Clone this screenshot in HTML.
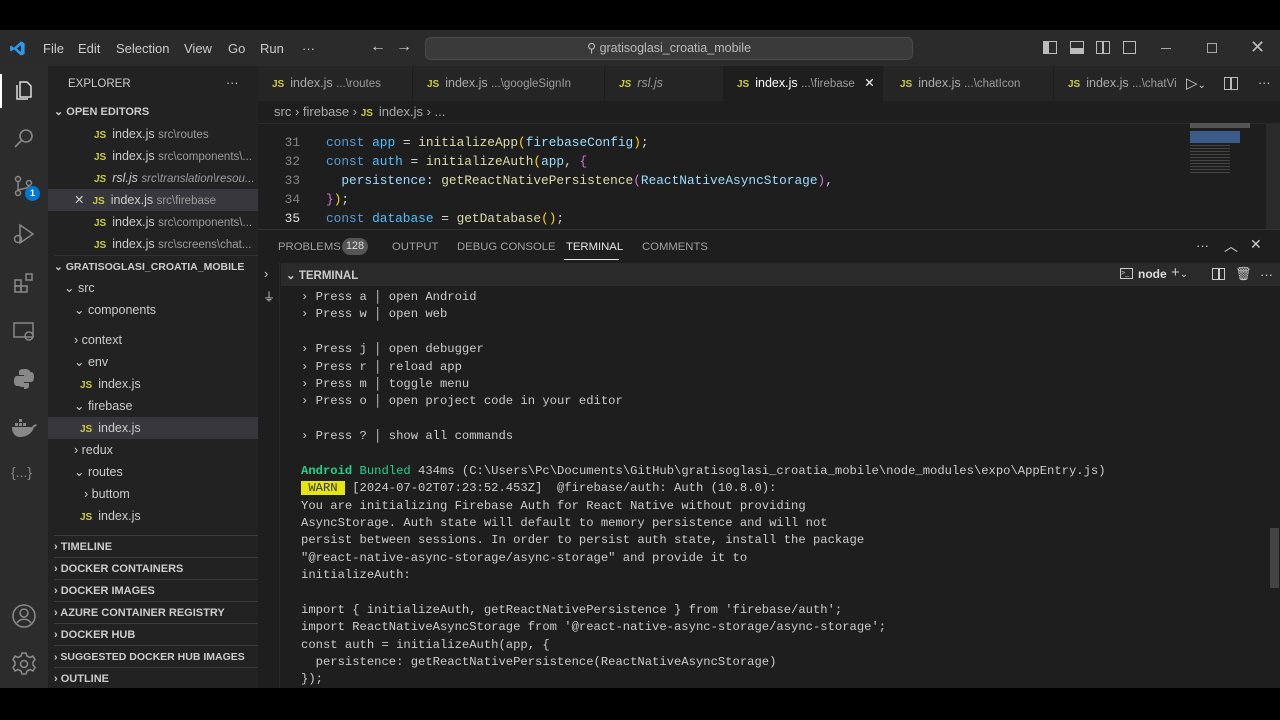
<!DOCTYPE html>
<html><head><meta charset="utf-8"><style>
*{box-sizing:border-box;margin:0;padding:0}
body{width:1280px;height:720px;background:#000;position:relative;overflow:hidden;font-family:"Liberation Sans",sans-serif;color:#ccc;font-size:13px}
.abs{position:absolute}
.title{left:0;top:30px;width:1280px;height:36px;background:#2b2b2b}
.menu span{position:absolute;top:11px;font-size:13px;color:#ccc}
.act{left:0;top:66px;width:48px;height:622px;background:#2c2c2c}
.side{left:48px;top:66px;width:210px;height:622px;background:#222;overflow:hidden}
.row{position:absolute;left:0;width:210px;height:22px;line-height:22px;font-size:12.5px;color:#ccc;white-space:nowrap}
.js{color:#cbcb41;font-weight:bold;font-size:10px;margin-right:6px}
.dim{color:#9d9d9d;font-size:11.5px}
.sec{font-weight:bold;font-size:11px;color:#ccc}
.tabs{left:258px;top:66px;width:1022px;height:35px;background:#252525}
.tab{position:absolute;top:0;height:35px;line-height:35px;font-size:12.5px;color:#999;white-space:nowrap}
.ed{left:258px;top:101px;width:1022px;height:128px;background:#1e1e1e}
.code{font-family:"Liberation Mono",monospace;font-size:12.8px;white-space:pre;position:absolute;line-height:19px}
.k{color:#569cd6}.v{color:#9cdcfe}.f{color:#dcdcaa}.p{color:#ffd700}.q{color:#da70d6}.n{color:#4fc1ff}
.panel{left:258px;top:229px;width:1022px;height:459px;background:#1e1e1e;border-top:1px solid #333}
.pt{position:absolute;top:11px;font-size:11.3px;color:#a0a0a0}
.term{font-family:"Liberation Mono",monospace;font-size:12.2px;white-space:pre;position:absolute;left:301px;line-height:17.38px;color:#cccccc}
</style></head><body>
<div class="abs title">
 <svg class="abs" style="left:9px;top:10px" width="17" height="17" viewBox="0 0 24 24"><path d="M17 2 L22 4.5 V19.5 L17 22 L7 13 L3 16 L1.5 15 V9 L3 8 L7 11 L17 2 Z M17 7 L11 12 L17 17 Z" fill="#2f9bf0"/></svg>
 <div class="menu"><span style="left:43px">File</span><span style="left:78px">Edit</span><span style="left:116px">Selection</span><span style="left:184px">View</span><span style="left:228px">Go</span><span style="left:260px">Run</span><span style="left:302px">···</span><span style="left:370px;top:8px;font-size:16px">←</span><span style="left:396px;top:8px;font-size:16px">→</span></div>
 <div class="abs" style="left:425px;top:7px;width:488px;height:23px;background:#3a3a3a;border:1px solid #4a4a4a;border-radius:6px;text-align:center;line-height:21px;font-size:12.5px;color:#bbb">⚲ gratisoglasi_croatia_mobile</div>
 <div class="abs" style="left:1043px;top:11px;width:14px;height:13px;border:1.5px solid #bbb;border-left:6px solid #bbb"></div>
 <div class="abs" style="left:1070px;top:11px;width:14px;height:13px;border:1.5px solid #bbb;border-bottom:6px solid #bbb"></div>
 <div class="abs" style="left:1096px;top:11px;width:14px;height:13px;border:1.5px solid #bbb"></div><div class="abs" style="left:1102px;top:11px;width:1.5px;height:13px;background:#bbb"></div>
 <div class="abs" style="left:1123px;top:11px;width:13px;height:13px;border:1.5px solid #bbb"></div>
 <div class="abs" style="left:1161px;top:18px;width:10px;height:1px;background:#aaa"></div>
 <div class="abs" style="left:1207px;top:13px;width:10px;height:10px;border:1px solid #aaa"></div>
 <div class="abs" style="left:1250px;top:7px;font-size:18px;color:#bbb">✕</div>
</div>
<div class="abs act">
 <div class="abs" style="left:0;top:8px;width:2px;height:34px;background:#fff"></div>
 <svg class="abs" style="left:12px;top:12px" width="24" height="24" viewBox="0 0 24 24" fill="none" stroke="#ddd" stroke-width="1.5"><path d="M8 4h7l4 4v11H8z M5 7v14h11"/></svg>
 <svg class="abs" style="left:12px;top:60px" width="24" height="24" viewBox="0 0 24 24" fill="none" stroke="#888" stroke-width="1.6"><circle cx="14" cy="10" r="6"/><path d="M9.5 14.5L3 21"/></svg>
 <svg class="abs" style="left:12px;top:108px" width="24" height="24" viewBox="0 0 24 24" fill="none" stroke="#888" stroke-width="1.5"><circle cx="6" cy="5" r="2.5"/><circle cx="6" cy="19" r="2.5"/><circle cx="17" cy="9" r="2.5"/><path d="M6 7.5v9M17 11.5c0 4-11 3-11 5"/></svg>
 <div class="abs" style="left:25px;top:120px;width:15px;height:15px;border-radius:50%;background:#0078d4;color:#fff;font-size:9px;text-align:center;line-height:15px;font-weight:bold">1</div>
 <svg class="abs" style="left:12px;top:156px" width="24" height="24" viewBox="0 0 24 24" fill="none" stroke="#888" stroke-width="1.5"><path d="M8 3l13 9-13 9z"/><circle cx="6" cy="17" r="3.5"/></svg>
 <svg class="abs" style="left:12px;top:205px" width="24" height="24" viewBox="0 0 24 24" fill="none" stroke="#888" stroke-width="1.5"><rect x="3" y="9" width="6" height="6"/><rect x="3" y="15" width="6" height="6"/><rect x="9" y="15" width="6" height="6"/><rect x="14" y="3" width="6" height="6"/></svg>
 <svg class="abs" style="left:12px;top:253px" width="24" height="24" viewBox="0 0 24 24" fill="none" stroke="#888" stroke-width="1.5"><rect x="2" y="4" width="19" height="14"/><circle cx="17" cy="17" r="4"/></svg>
 <svg class="abs" style="left:12px;top:301px" width="24" height="24" viewBox="0 0 24 24" fill="#888"><path d="M12 2c-5 0-5 2-5 3v3h5v1H5c-2 0-3 2-3 5s1 5 3 5h2v-3c0-2 1-3 3-3h5c2 0 3-1 3-3V5c0-2-2-3-6-3z M12 22c5 0 5-2 5-3v-3h-5v-1h7c2 0 3-2 3-5s-1-5-3-5h-2v3c0 2-1 3-3 3H9c-2 0-3 1-3 3v3c0 2 2 3 6 3z"/></svg>
 <svg class="abs" style="left:10px;top:350px" width="28" height="24" viewBox="0 0 28 24" fill="#888"><path d="M2 11h20c2-3 4-3 5-2-1 1-2 2-3 2-2 7-8 10-14 10C5 21 2 17 2 11z"/><rect x="5" y="7" width="3" height="3"/><rect x="9" y="7" width="3" height="3"/><rect x="13" y="7" width="3" height="3"/><rect x="9" y="3" width="3" height="3"/></svg>
 <div class="abs" style="left:11px;top:398px;font-size:14px;color:#888">{...}</div>
 <svg class="abs" style="left:11px;top:537px" width="26" height="26" viewBox="0 0 26 26" fill="none" stroke="#888" stroke-width="1.6"><circle cx="13" cy="13" r="11"/><circle cx="13" cy="10" r="4"/><path d="M6 20c3-5 11-5 14 0"/></svg>
 <svg class="abs" style="left:11px;top:585px" width="26" height="26" viewBox="0 0 26 26" fill="none" stroke="#888" stroke-width="1.6"><circle cx="13" cy="13" r="3.5"/><path d="M11 2h4l1 3 3 1.5 3-1.5 2 3.5-2 2.5v3l2 2.5-2 3.5-3-1.5-3 1.5-1 3h-4l-1-3-3-1.5-3 1.5-2-3.5 2-2.5v-3l-2-2.5 2-3.5 3 1.5 3-1.5z"/></svg>
</div>
<div class="abs side">
 <div class="row" style="top:7px;left:20px;font-size:11.5px">EXPLORER</div><div class="row" style="top:6px;left:178px;width:30px">···</div>
 <div class="row sec" style="top:35px;left:6px">⌄ OPEN EDITORS</div>
 <div class="row" style="top:57px;left:46px"><span class="js">JS</span>index.js <span class="dim">src\routes</span></div>
 <div class="row" style="top:79px;left:46px"><span class="js">JS</span>index.js <span class="dim">src\components\...</span></div>
 <div class="row" style="top:101px;left:46px;font-style:italic"><span class="js">JS</span>rsl.js <span class="dim">src\translation\resou...</span></div>
 <div class="row" style="top:123px;left:0;background:#37373d;padding-left:26px"><span style="margin-right:8px">✕</span><span class="js">JS</span>index.js <span class="dim">src\firebase</span></div>
 <div class="row" style="top:145px;left:46px"><span class="js">JS</span>index.js <span class="dim">src\components\...</span></div>
 <div class="row" style="top:167px;left:46px"><span class="js">JS</span>index.js <span class="dim">src\screens\chat...</span></div>
 <div class="row sec" style="top:189px;left:6px;border-top:1px solid #333;font-size:10.5px">⌄ GRATISOGLASI_CROATIA_MOBILE</div>
 <div class="row" style="top:211px;left:16px">⌄ src</div>
 <div class="row" style="top:233px;left:26px">⌄ components</div>
 <div class="row" style="top:263px;left:26px">› context</div>
 <div class="row" style="top:285px;left:26px">⌄ env</div>
 <div class="row" style="top:307px;left:32px"><span class="js">JS</span>index.js</div>
 <div class="row" style="top:329px;left:26px">⌄ firebase</div>
 <div class="row" style="top:351px;left:0;background:#37373d;padding-left:32px"><span class="js">JS</span>index.js</div>
 <div class="row" style="top:373px;left:26px">› redux</div>
 <div class="row" style="top:395px;left:26px">⌄ routes</div>
 <div class="row" style="top:417px;left:36px">› buttom</div>
 <div class="row" style="top:439px;left:32px"><span class="js">JS</span>index.js</div>
 <div class="row sec" style="top:469px;left:6px;border-top:1px solid #3a3a3a">› TIMELINE</div>
 <div class="row sec" style="top:491px;left:6px;border-top:1px solid #3a3a3a">› DOCKER CONTAINERS</div>
 <div class="row sec" style="top:513px;left:6px;border-top:1px solid #3a3a3a">› DOCKER IMAGES</div>
 <div class="row sec" style="top:535px;left:6px;border-top:1px solid #3a3a3a">› AZURE CONTAINER REGISTRY</div>
 <div class="row sec" style="top:557px;left:6px;border-top:1px solid #3a3a3a">› DOCKER HUB</div>
 <div class="row sec" style="top:579px;left:6px;border-top:1px solid #3a3a3a;font-size:10.5px">› SUGGESTED DOCKER HUB IMAGES</div>
 <div class="row sec" style="top:601px;left:6px;border-top:1px solid #3a3a3a">› OUTLINE</div>
</div>
<div class="abs tabs">
 <div class="tab" style="left:14px"><span class="js">JS</span><span style="color:#aaa">index.js</span> <span class="dim">...\routes</span></div>
 <div class="tab" style="left:154px;border-left:1px solid #1e1e1e;padding-left:14px"><span class="js">JS</span><span style="color:#aaa">index.js</span> <span class="dim">...\googleSignIn</span></div>
 <div class="tab" style="left:346px;border-left:1px solid #1e1e1e;padding-left:14px;font-style:italic"><span class="js">JS</span>rsl.js</div>
 <div class="tab" style="left:465px;width:160px;background:#1e1e1e;padding-left:14px;color:#fff"><span class="js">JS</span>index.js <span class="dim">...\firebase</span> <span style="margin-left:6px">✕</span></div>
 <div class="tab" style="left:628px;padding-left:14px"><span class="js">JS</span><span style="color:#aaa">index.js</span> <span class="dim">...\chatIcon</span></div>
 <div class="tab" style="left:795px;border-left:1px solid #1e1e1e;padding-left:14px"><span class="js">JS</span><span style="color:#aaa">index.js</span> <span class="dim">...\chatVi</span></div>
 <div class="tab" style="left:928px;color:#ccc;font-size:15px">▷<span style="font-size:10px">⌄</span></div>
 <div class="abs" style="left:966px;top:11px;width:14px;height:13px;border:1.5px solid #bbb"></div><div class="abs" style="left:972px;top:11px;width:1.5px;height:13px;background:#bbb"></div>
 <div class="tab" style="left:1000px;color:#ccc">···</div>
</div>
<div class="abs ed">
 <div class="abs" style="left:16px;top:3px;font-size:13px;color:#aaa">src › firebase › <span class="js">JS</span>index.js › ...</div>
 <div class="abs" style="left:0;top:22px;width:1022px;height:1px;background:#2a2a2a"></div>
 <div class="code" style="left:0;top:32px;width:42px;text-align:right;color:#858585">31
32
33
34
<span style="color:#ddd">35</span></div>
 <div class="code" style="left:68px;top:32px;color:#d4d4d4"><span class="k">const</span> <span class="n">app</span> = <span class="f">initializeApp</span><span class="p">(</span><span class="v">firebaseConfig</span><span class="p">)</span>;
<span class="k">const</span> <span class="n">auth</span> = <span class="f">initializeAuth</span><span class="p">(</span><span class="v">app</span>, <span class="q">{</span>
  <span class="v">persistence</span>: <span class="f">getReactNativePersistence</span><span class="q">(</span><span class="v">ReactNativeAsyncStorage</span><span class="q">)</span>,
<span class="q">}</span><span class="p">)</span>;
<span class="k">const</span> <span class="n">database</span> = <span class="f">getDatabase</span><span class="p">()</span>;</div>
 <div class="abs" style="left:932px;top:22px;width:60px;height:5px;background:#555"></div>
 <div class="abs" style="left:932px;top:30px;width:50px;height:12px;background:#3a5a8a"></div>
 <div class="abs" style="left:932px;top:44px;width:40px;height:28px;background:repeating-linear-gradient(#444 0 1px,transparent 1px 3px)"></div>
 <div class="abs" style="left:1008px;top:22px;width:14px;height:106px;background:#2a2a2a"></div>
</div>
<div class="abs panel">
 <div class="pt" style="left:20px">PROBLEMS</div>
 <div class="abs" style="left:84px;top:8px;width:26px;height:17px;border-radius:9px;background:#555;color:#ddd;font-size:11px;text-align:center;line-height:17px">128</div>
 <div class="pt" style="left:134px">OUTPUT</div>
 <div class="pt" style="left:199px">DEBUG CONSOLE</div>
 <div class="pt" style="left:308px;color:#e7e7e7">TERMINAL</div><div class="abs" style="left:306px;top:29px;width:55px;height:1px;background:#e7e7e7"></div>
 <div class="pt" style="left:384px">COMMENTS</div>
 <div class="abs" style="left:938px;top:8px;color:#ccc">···</div>
 <div class="abs" style="left:966px;top:6px;color:#ccc;font-size:14px">︿</div>
 <div class="abs" style="left:992px;top:6px;color:#ccc;font-size:14px">✕</div>
 <div class="abs" style="left:0;top:33px;width:22px;height:426px;background:#1e1e1e;border-right:1px solid #2a2a2a"></div>
 <div class="abs" style="left:6px;top:36px;color:#ccc">›</div>
 <div class="abs" style="left:5px;top:58px;color:#ccc;font-size:12px">⏚</div>
 <div class="abs" style="left:23px;top:33px;width:999px;height:23px;background:#2a2a2a"></div>
 <div class="abs" style="left:28px;top:38px;font-size:11.5px;font-weight:bold;color:#ccc">⌄ TERMINAL</div>
 <div class="abs" style="left:862px;top:38px;width:13px;height:11px;border:1px solid #ccc;font-size:7px;line-height:9px;color:#ccc">&gt;_</div>
 <div class="abs" style="left:880px;top:37px;font-size:12px;font-weight:bold;color:#ddd">node</div>
 <div class="abs" style="left:913px;top:34px;font-size:15px;color:#ccc">+<span style="font-size:10px">⌄</span></div>
 <div class="abs" style="left:954px;top:38px;width:13px;height:12px;border:1.5px solid #ccc"></div><div class="abs" style="left:960px;top:38px;width:1.5px;height:12px;background:#ccc"></div>
 <div class="abs" style="left:977px;top:36px;font-size:13px;color:#ccc">🗑</div>
 <div class="abs" style="left:1002px;top:37px;color:#ccc">···</div>
 <div class="abs" style="left:1012px;top:298px;width:9px;height:60px;background:#444"></div>
</div>
<div class="term" style="top:289px">› Press a │ open Android
› Press w │ open web

› Press j │ open debugger
› Press r │ reload app
› Press m │ toggle menu
› Press o │ open project code in your editor

› Press ? │ show all commands

<span style="color:#23d18b;font-weight:bold">Android</span> <span style="color:#23d18b">Bundled</span> 434ms (C:\Users\Pc\Documents\GitHub\gratisoglasi_croatia_mobile\node_modules\expo\AppEntry.js)
<span style="background:#e5e510;color:#333"> WARN </span> [2024-07-02T07:23:52.453Z]  @firebase/auth: Auth (10.8.0):
You are initializing Firebase Auth for React Native without providing
AsyncStorage. Auth state will default to memory persistence and will not
persist between sessions. In order to persist auth state, install the package
"@react-native-async-storage/async-storage" and provide it to
initializeAuth:

import { initializeAuth, getReactNativePersistence } from 'firebase/auth';
import ReactNativeAsyncStorage from '@react-native-async-storage/async-storage';
const auth = initializeAuth(app, {
  persistence: getReactNativePersistence(ReactNativeAsyncStorage)
});</div>
<div class="abs" style="left:0;top:688px;width:1280px;height:32px;background:#000"></div>
</body></html>
